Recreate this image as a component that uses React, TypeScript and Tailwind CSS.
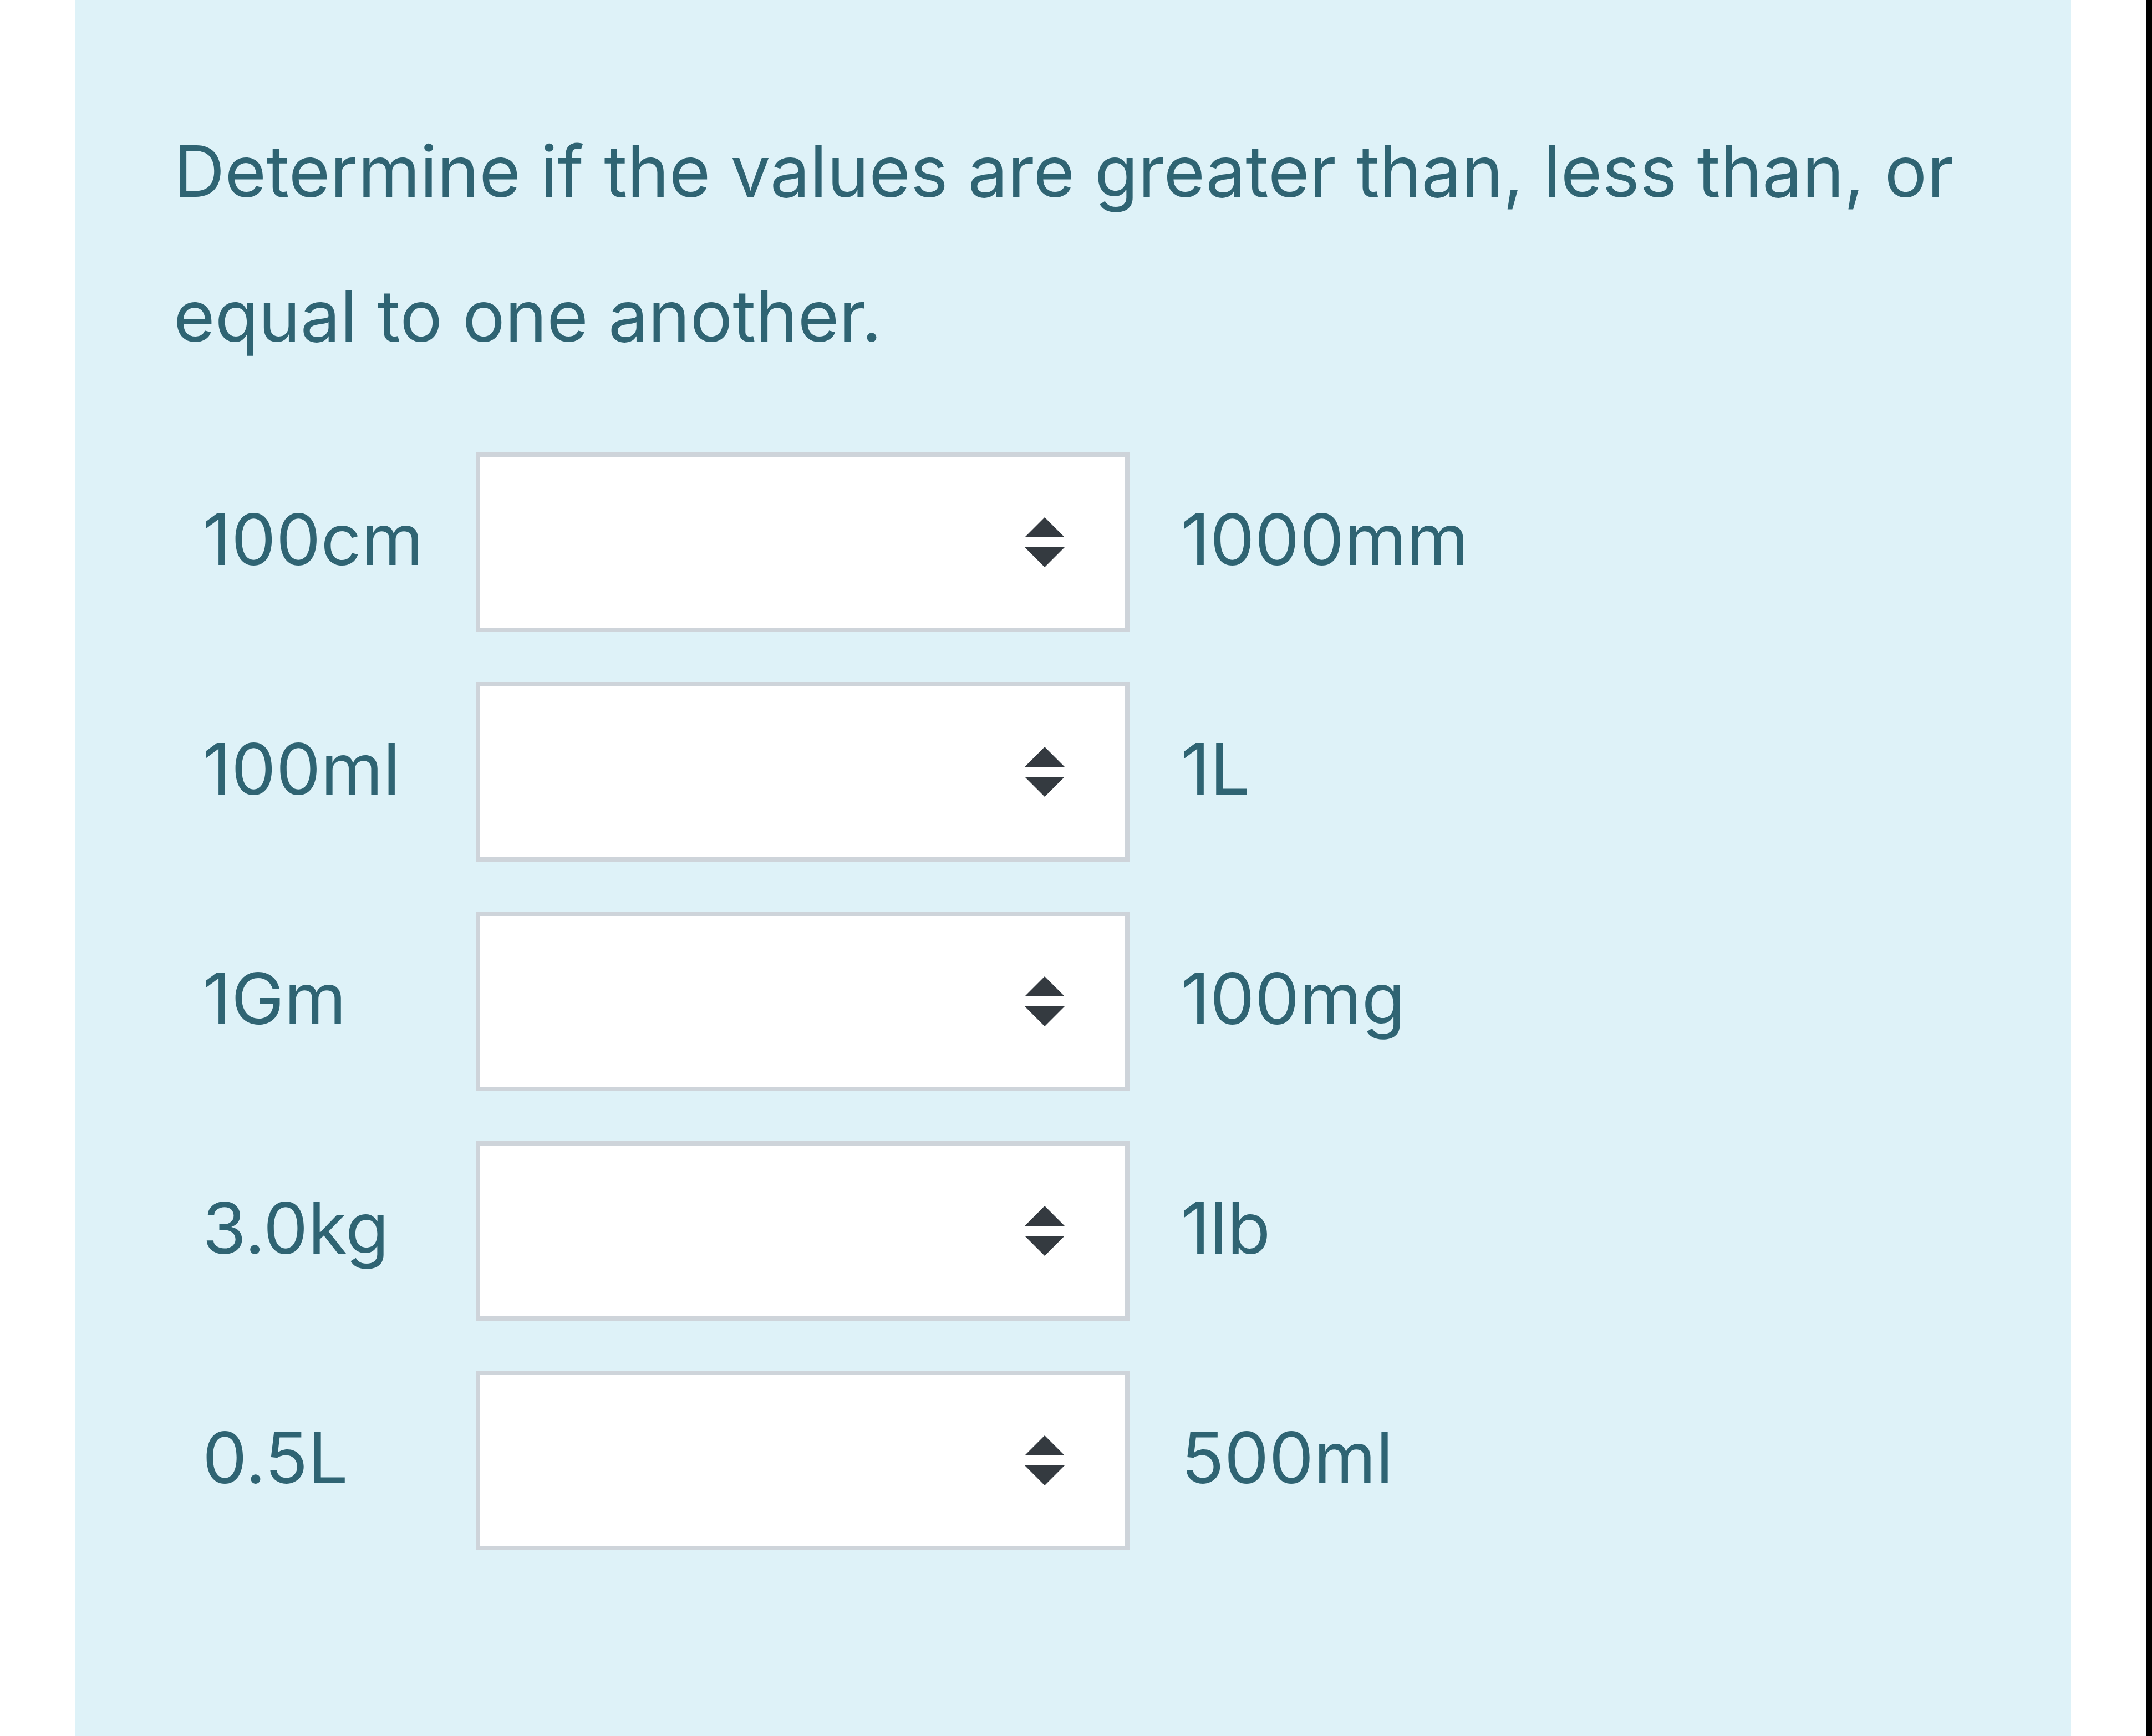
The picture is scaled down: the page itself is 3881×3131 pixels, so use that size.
import React from "react";

const rows: [string, string][] = [
  ["100cm", "1000mm"],
  ["100ml", "1L"],
  ["1Gm", "100mg"],
  ["3.0kg", "1lb"],
  ["0.5L", "500ml"],
];

function Arrows() {
  return (
    <svg width="72" height="90" viewBox="0 0 72 90" className="block">
      <polygon points="36,0 72,36 0,36" fill="#343a40" />
      <polygon points="0,54 72,54 36,90" fill="#343a40" />
    </svg>
  );
}

export default function App() {
  return (
    <div
      className="w-[3881px] h-[3131px] bg-white flex overflow-hidden"
      style={{ fontFamily: "Inter, 'Noto Sans', sans-serif" }}
    >
      <div className="ml-[136px] w-[3599px] h-full bg-[#def2f8] pt-[178px] pl-[177px] text-[#2f6473]">
        <p className="text-[128px] leading-[261px] w-[3300px]">
          Determine if the values are greater than, less than, or equal to one another.
        </p>
        <div className="mt-[116px] flex flex-col gap-[90px] pl-[52px]">
          {rows.map(([a, b]) => (
            <div key={a} className="flex items-center">
              <div className="w-[493px] text-[128px] leading-none pb-[10px]">{a}</div>
              <div className="w-[1179px] h-[324px] border-[8px] border-[#ced4da] bg-white flex items-center justify-end pr-[109px]">
                <Arrows />
              </div>
              <div className="ml-[93px] text-[128px] leading-none pb-[10px]">{b}</div>
            </div>
          ))}
        </div>
      </div>
      <div className="ml-[135px] w-[11px] h-full bg-black" />
    </div>
  );
}
